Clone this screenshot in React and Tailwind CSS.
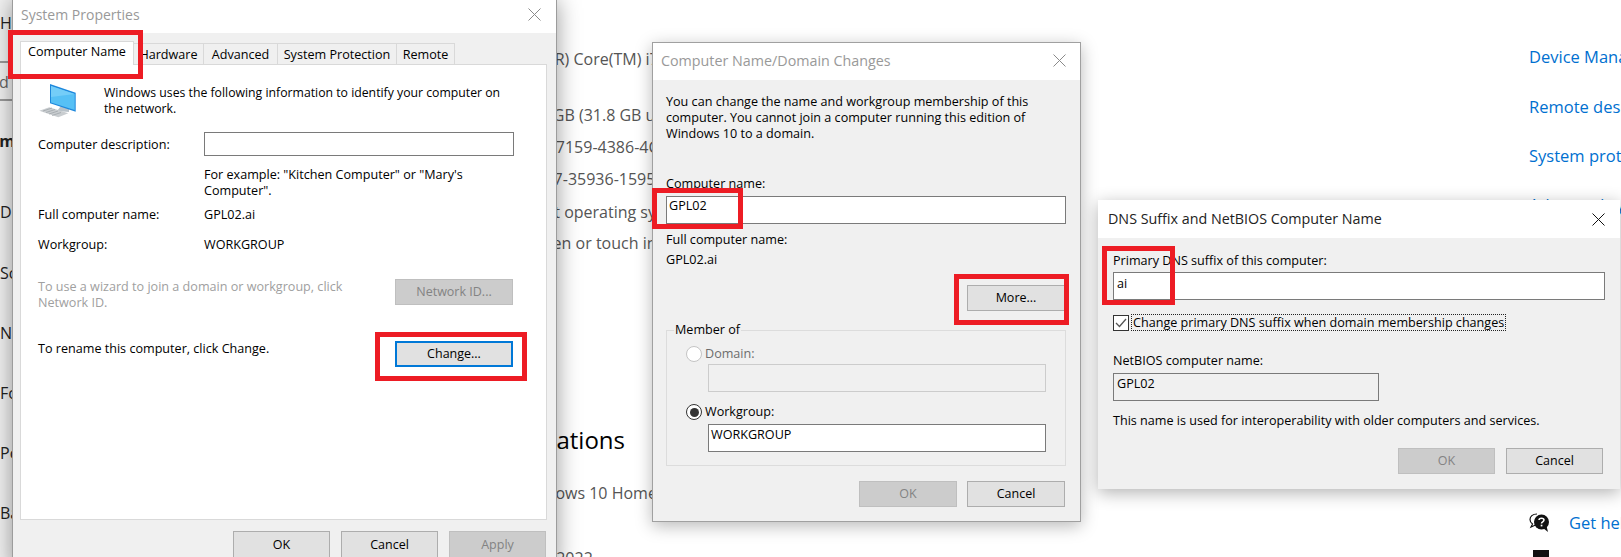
const UI_FONT = "font-['Open_Sans','Noto_Sans',sans-serif]"

function Btn({ label, w = 'w-[98px]', h = 'h-[26px]', disabled, focused, className = '' }) {
  let look = 'bg-[#e1e1e1] border border-[#adadad] text-black'
  if (disabled) look = 'bg-[#cccccc] border border-[#bfbfbf] text-[#838383]'
  if (focused) look = 'bg-[#e1e1e1] border-2 border-[#0078d7] text-black'
  return (
    <div className={`flex shrink-0 items-center justify-center text-[12.5px] ${w} ${h} ${look} ${className}`}>
      {label}
    </div>
  )
}

function CloseIcon({ color = '#8a8a8a' }) {
  return (
    <svg width="13" height="13" viewBox="0 0 13 13" fill="none" stroke={color} strokeWidth="1">
      <path d="M0.5 0.5 L12.5 12.5 M12.5 0.5 L0.5 12.5" />
    </svg>
  )
}

function TitleBar({ title, h, color, closeColor, pad, size = 'text-[14.3px]' }) {
  return (
    <div className={`flex shrink-0 items-center justify-between bg-white ${h} ${pad}`}>
      <span className={`leading-5 ${size} ${color}`}>{title}</span>
      <CloseIcon color={closeColor} />
    </div>
  )
}

function PcIcon() {
  return (
    <svg width="38" height="34" viewBox="0 0 38 34" className="shrink-0">
      <polygon points="22,22 30,25 30,28 18,27" fill="#b9c2c9" />
      <polygon points="0.3,26.7 10.3,23.3 29.3,29.3 19.3,33.3" fill="#c9cdd0" />
      <path d="M4 27 L13 24 M7 28.5 L16 25.5 M10 30 L19 27 M13 31.5 L22 28.5" stroke="#9aa0a5" strokeWidth="0.7" />
      <polygon points="11,0 36.7,8.7 36.7,27.7 11,19.3" fill="#1e88dc" />
      <polygon points="12,2 35.7,10 35.7,26 12,18.4" fill="#56c0f5" />
      <polygon points="12,2 35.7,10 12,13" fill="#74cdf8" />
    </svg>
  )
}

function HelpIcon() {
  return (
    <svg width="21" height="20" viewBox="0 0 21 20" className="shrink-0">
      <path d="M8 1 C3.500 1 1 3.500 1 6.500 C1 8.500 2 10 3.500 11 L2 14 L6.500 12 C7 12 7.500 12.200 8 12.200" fill="none" stroke="#111" strokeWidth="1.200" />
      <circle cx="12.500" cy="9" r="7.500" fill="#111" />
      <path d="M14 15 L19 19 L17.500 13 Z" fill="#111" />
      <path d="M10 7 C10 4.500 15 4.500 15 7 C15 8.800 12.500 8.800 12.500 10.500" fill="none" stroke="#fff" strokeWidth="1.500" />
      <rect x="11.700" y="11.700" width="1.700" height="1.700" fill="#fff" />
    </svg>
  )
}

function SystemProperties() {
  const tab = 'flex h-[21px] items-center justify-center border border-l-0 border-b-0 border-[#d9d9d9] pt-[2px]'
  return (
    <div className="absolute left-[12px] top-0 flex h-[570px] w-[545px] flex-col border-x border-[#9c9c9c] bg-[#f0f0f0] text-[12.6px] leading-4 text-black shadow-[0_0_22px_rgba(0,0,0,0.4)]">
      <TitleBar title="System Properties" h="h-[33px]" color="text-[#999999]" closeColor="#8a8a8a" pad="pl-[8px] pr-[15px] pb-[4px]" size="text-[14px]" />
      <div className="flex h-[31px] items-end pl-[7px]">
        <div className="relative z-10 -mb-px flex h-[24px] w-[114px] items-start justify-center border border-b-0 border-[#d9d9d9] bg-white pt-[2px]">Computer Name</div>
        <div className={`${tab} w-[70px]`}>Hardware</div>
        <div className={`${tab} w-[74px]`}>Advanced</div>
        <div className={`${tab} w-[119px]`}>System Protection</div>
        <div className={`${tab} w-[58px]`}>Remote</div>
      </div>
      <div className="ml-[7px] flex h-[456px] w-[527px] flex-col border border-[#d9d9d9] bg-white">
        <div className="mt-[19px] flex pl-[18px]">
          <PcIcon />
          <p className="ml-[27px] mt-px text-[12.25px]">Windows uses the following information to identify your computer on<br />the network.</p>
        </div>
        <div className="mt-[14px] flex items-center pl-[17px]">
          <span className="mt-px w-[166px]">Computer description:</span>
          <div className="h-[24px] w-[310px] border border-[#7a7a7a] bg-white" />
        </div>
        <p className="mt-[11px] pl-[183px]">For example: "Kitchen Computer" or "Mary's<br />Computer".</p>
        <div className="mt-[8px] flex pl-[17px]">
          <span className="w-[166px]">Full computer name:</span>
          <span>GPL02.ai</span>
        </div>
        <div className="mt-[14px] flex pl-[17px]">
          <span className="w-[166px]">Workgroup:</span>
          <span>WORKGROUP</span>
        </div>
        <div className="mt-[26px] flex pl-[17px]">
          <p className="w-[357px] text-[#a0a0a0]">To use a wizard to join a domain or workgroup, click<br />Network ID.</p>
          <Btn label="Network ID..." w="w-[118px]" disabled />
        </div>
        <div className="mt-[30px] flex pl-[17px]">
          <p className="w-[357px]">To rename this computer, click Change.</p>
          <Btn label="Change..." w="w-[118px]" focused />
        </div>
      </div>
      <div className="ml-[220px] mt-[11px] flex gap-[11px]">
        <Btn label="OK" w="w-[97px]" h="h-[27px]" />
        <Btn label="Cancel" w="w-[97px]" h="h-[27px]" />
        <Btn label="Apply" w="w-[97px]" h="h-[27px]" disabled />
      </div>
    </div>
  )
}

function DomainChanges() {
  return (
    <div className="absolute left-[652px] top-[42px] flex h-[480px] w-[429px] flex-col border border-[#a0a0a0] bg-[#f0f0f0] text-[12.6px] leading-4 text-black shadow-[0_4px_16px_rgba(0,0,0,0.28)]">
      <TitleBar title="Computer Name/Domain Changes" h="h-[37px]" color="text-[#999999]" closeColor="#8a8a8a" pad="pl-[8px] pr-[14px] pb-[2px]" />
      <div className="flex flex-col pl-[13px] pt-[14px]">
        <p>You can change the name and workgroup membership of this<br />computer. You cannot join a computer running this edition of<br />Windows 10 to a domain.</p>
        <p className="mt-[34px]">Computer name:</p>
        <div className="mt-[4px] flex h-[28px] w-[400px] items-start border border-[#7a7a7a] bg-white pl-[2px] pt-[1px]">GPL02</div>
        <p className="mt-[8px]">Full computer name:</p>
        <p className="mt-[4px]">GPL02.ai</p>
        <Btn label="More..." className="ml-[301px] mt-[17px]" />
        <fieldset className="mt-[11px] h-[144px] w-[400px] border border-[#dcdcdc]">
          <legend className="ml-[7px] px-[1px]">Member of</legend>
          <div className="mt-[8px] flex items-center pl-[19px] text-[#6d6d6d]">
            <span className="h-[16px] w-[16px] rounded-full border border-[#c4c4c4] bg-white" />
            <span className="ml-[3px]">Domain:</span>
          </div>
          <div className="ml-[41px] mt-[2px] h-[28px] w-[338px] border border-[#cccccc]" />
          <div className="mt-[12px] flex items-center pl-[19px]">
            <span className="flex h-[16px] w-[16px] items-center justify-center rounded-full border border-[#333333] bg-white">
              <span className="h-[9px] w-[9px] rounded-full bg-[#333333]" />
            </span>
            <span className="ml-[3px]">Workgroup:</span>
          </div>
          <div className="ml-[41px] mt-[4px] flex h-[28px] w-[338px] items-start border border-[#7a7a7a] bg-white pl-[2px] pt-[2px]">WORKGROUP</div>
        </fieldset>
        <div className="ml-[193px] mt-[15px] flex gap-[10px]">
          <Btn label="OK" disabled />
          <Btn label="Cancel" />
        </div>
      </div>
    </div>
  )
}

function DnsSuffix() {
  return (
    <div className="absolute left-[1098px] top-[200px] flex h-[289px] w-[522px] flex-col bg-[#f0f0f0] text-[12.6px] leading-4 text-black shadow-[0_4px_16px_rgba(0,0,0,0.3)]">
      <TitleBar title="DNS Suffix and NetBIOS Computer Name" h="h-[38px]" color="text-[#222222]" closeColor="#111111" pad="pl-[10px] pr-[15px]" />
      <div className="flex flex-col pl-[15px] pt-[15px]">
        <p>Primary DNS suffix of this computer:</p>
        <div className="mt-[3px] flex h-[28px] w-[492px] items-start border border-[#7a7a7a] bg-white pl-[3px] pt-[3px]">ai</div>
        <div className="mt-[14px] flex h-[17px] items-center">
          <span className="flex h-[16px] w-[16px] items-center justify-center border border-[#333333] bg-white">
            <svg width="12" height="10" viewBox="0 0 12 10" fill="none" stroke="#555555" strokeWidth="1.300">
              <path d="M1 5 L4.500 8.500 L11 1" />
            </svg>
          </span>
          <span className="ml-[2px] border border-dotted border-[#222222] px-[1px] leading-[15px]">Change primary DNS suffix when domain membership changes</span>
        </div>
        <p className="mt-[22px]">NetBIOS computer name:</p>
        <div className="mt-[4px] flex h-[28px] w-[266px] items-start border border-[#7a7a7a] pl-[3px] pt-[2px]">GPL02</div>
        <p className="mt-[12px]">This name is used for interoperability with older computers and services.</p>
        <div className="ml-[285px] mt-[19px] flex gap-[11px]">
          <Btn label="OK" w="w-[97px]" disabled />
          <Btn label="Cancel" w="w-[97px]" />
        </div>
      </div>
    </div>
  )
}

function Sidebar() {
  const items = [
    ['Display', 'mt-[51px]'],
    ['Sound', 'mt-[41px]'],
    ['Notifications', 'mt-[40px]'],
    ['Focus assist', 'mt-[40px]'],
    ['Power', 'mt-[40px]'],
    ['Battery', 'mt-[40px]'],
  ]
  return (
    <div className="flex h-full w-[100px] shrink-0 flex-col overflow-hidden bg-[#f2f2f2] text-[16px] leading-5 text-[#222222]">
      <p className="mt-[13px]">Home</p>
      <div className="mt-[28px] h-[40px] border-y-2 border-[#9a9a9a] pt-[9px] text-[#666666]">
        <p className="-ml-[23px] whitespace-nowrap">Find a setting</p>
      </div>
      <p className="-ml-[43px] mt-[30px] font-bold">System</p>
      {items.map(([label, gap]) => (
        <p key={label} className={gap}>{label}</p>
      ))}
    </div>
  )
}

function AboutColumn() {
  return (
    <div className="ml-[417px] flex h-full w-[498px] shrink-0 flex-col overflow-hidden whitespace-nowrap text-[16px] leading-5 text-[#555555]">
      <p className="mt-[49px]">Intel(R) Core(TM) i7-9750H CPU</p>
      <p className="mt-[36px]">32.0 GB (31.8 GB usable)</p>
      <p className="mt-[12px]">D2E97159-4386-4C21-9E0B</p>
      <p className="mt-[12px]">00327-35936-15950-AAOEM</p>
      <p className="mt-[13px]">64-bit operating system, x64-based processor</p>
      <p className="mt-[11px]">No pen or touch input is available</p>
      <h2 className="-ml-[300px] mt-[171px] w-[408px] text-right text-[24px] leading-8 text-black">Windows specifications</h2>
      <p className="mt-[27px]">Windows 10 Home</p>
      <p className="mt-[45px]">9/27/2022</p>
    </div>
  )
}

function LinksColumn() {
  return (
    <div className="ml-[514px] flex h-full w-[92px] shrink-0 flex-col overflow-hidden whitespace-nowrap text-[16.5px] leading-5 text-[#0070d0]">
      <p className="mt-[47px]">Device Manager</p>
      <p className="mt-[30px]">Remote desktop</p>
      <p className="mt-[29px]">System protection</p>
      <p className="mt-[29px]">Advanced system settings</p>
      <div className="mt-[298px] flex items-center">
        <span className="flex w-[40px] shrink-0">
          <HelpIcon />
        </span>
        <span>Get help</span>
      </div>
      <div className="mt-[17px] flex">
        <span className="ml-[4px] h-[12px] w-[16px] shrink-0 bg-[#111111]" />
        <span className="ml-[20px] mt-[4px]">Give feedback</span>
      </div>
    </div>
  )
}

export default function App() {
  return (
    <div className={`relative flex h-[557px] w-[1621px] overflow-hidden bg-white ${UI_FONT}`}>
      <Sidebar />
      <AboutColumn />
      <LinksColumn />
      <SystemProperties />
      <DomainChanges />
      <DnsSuffix />
      {/* red call-outs drawn over the screenshot */}
      <div className="absolute left-[8px] top-[30px] h-[49px] w-[135px] border-[5px] border-[#ed1c24]" />
      <div className="absolute left-[375px] top-[332px] h-[49px] w-[152px] border-[5px] border-[#ed1c24]" />
      <div className="absolute left-[652px] top-[188px] h-[41px] w-[91px] border-[5px] border-[#ed1c24]" />
      <div className="absolute left-[954px] top-[274px] h-[51px] w-[115px] border-[5px] border-[#ed1c24]" />
      <div className="absolute left-[1102px] top-[246px] h-[59px] w-[73px] border-[5px] border-[#ed1c24]" />
    </div>
  )
}
